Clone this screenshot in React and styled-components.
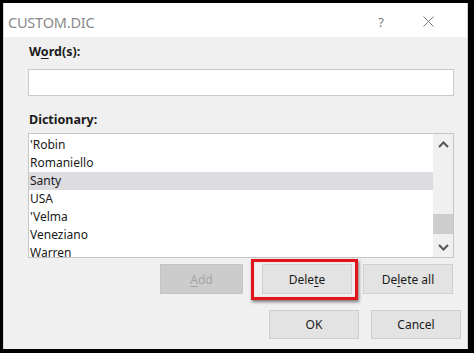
import React from 'react';
import styled, { createGlobalStyle } from 'styled-components';

const GlobalStyle = createGlobalStyle`
  html, body {
    margin: 0;
    padding: 0;
    background: #000;
  }
  body {
    font-family: 'Noto Sans', 'Open Sans', sans-serif;
  }
`;

const Page = styled.div`
  width: 474px;
  height: 353px;
  box-sizing: border-box;
  padding: 3px 6px 4px 3px;
  background: #000;
`;

const Dialog = styled.div`
  width: 465px;
  height: 346px;
  display: flex;
  flex-direction: column;
  background: #f0f0f0;
  border-left: 1px solid #d9d9d9;
  border-right: 1px solid #d0d0d0;
  box-sizing: border-box;
`;

const TitleBar = styled.div`
  height: 34px;
  flex: none;
  display: flex;
  align-items: center;
  background: #fff;
  padding: 3px 0 0 4px;
  box-sizing: border-box;
`;

const Title = styled.div`
  flex: 1;
  font-size: 14.5px;
  color: #8a8a8a;
  letter-spacing: -0.2px;
`;

const TitleButton = styled.div`
  width: ${(p) => p.$w}px;
  display: flex;
  justify-content: center;
  align-items: center;
  color: #7a7a7a;
  font-size: 13px;
`;

const Body = styled.div`
  flex: 1;
  display: flex;
  flex-direction: column;
  padding: 6px 13px 0 24px;
`;

const Label = styled.div`
  font-weight: 700;
  font-size: 12.5px;
  line-height: 18px;
  color: #1a1a1a;
  margin-top: ${(p) => p.$mt || 0}px;
  padding-left: 1px;
`;

const TextBox = styled.div`
  margin-top: 8px;
  height: 27px;
  box-sizing: border-box;
  background: #fff;
  border: 1px solid #c9c9c9;
`;

const ListBox = styled.div`
  margin-top: 4px;
  height: 125px;
  box-sizing: border-box;
  background: #fff;
  border: 1px solid #c6c6c6;
  display: flex;
  overflow: hidden;
`;

const Items = styled.div`
  flex: 1;
  padding-top: 2px;
`;

const Item = styled.div`
  height: 18px;
  line-height: 18px;
  font-size: 12px;
  color: #1a1a1a;
  padding-left: 1px;
  background: ${(p) => (p.$selected ? '#dcdce1' : 'transparent')};
`;

const ScrollBar = styled.div`
  width: 20px;
  flex: none;
  background: #f0f0f0;
  display: flex;
  flex-direction: column;
  align-items: center;
`;

const Arrow = styled.div`
  height: 20px;
  width: 100%;
  display: flex;
  align-items: center;
  justify-content: center;
`;

const Track = styled.div`
  flex: 1;
  width: 100%;
  display: flex;
  flex-direction: column;
  justify-content: flex-end;
  padding-bottom: 3px;
`;

const Thumb = styled.div`
  height: 20px;
  width: 100%;
  background: #cdcdcd;
`;

const ButtonRow = styled.div`
  display: flex;
  justify-content: flex-end;
  margin-top: ${(p) => p.$mt}px;
  margin-right: ${(p) => p.$mr || 0}px;
`;

const Button = styled.div`
  position: relative;
  width: ${(p) => p.$w || 90}px;
  height: ${(p) => p.$h || 30}px;
  margin-left: ${(p) => p.$ml || 0}px;
  box-sizing: border-box;
  display: flex;
  align-items: center;
  justify-content: center;
  font-size: 12px;
  color: ${(p) => (p.$disabled ? '#a6a6a6' : '#1a1a1a')};
  background: ${(p) => (p.$disabled ? '#cccccc' : '#e3e3e3')};
  border: 1px solid ${(p) => (p.$disabled ? '#c4c4c4' : '#cfcfcf')};
`;

const Highlight = styled.div`
  position: absolute;
  left: -12px;
  right: -7px;
  top: -6px;
  bottom: -7px;
  border: 3px solid #e3141c;
  box-shadow: 1px 2px 3px rgba(0, 0, 0, 0.5), inset 0 0 1px rgba(0, 0, 0, 0.3);
  pointer-events: none;
`;

const Key = styled.span`
  text-decoration: underline;
  text-underline-offset: 2px;
`;

const Chevron = ({ up }) => (
  <svg width="11" height="7" viewBox="0 0 11 7">
    <path
      d={up ? 'M1 6 L5.5 1.5 L10 6' : 'M1 1 L5.5 5.5 L10 1'}
      fill="none"
      stroke="#555"
      strokeWidth="2"
    />
  </svg>
);

const words = ["'Robin", 'Romaniello', 'Santy', 'USA', "'Velma", 'Veneziano', 'Warren'];

const App = () => (
  <Page>
    <GlobalStyle />
    <Dialog>
      <TitleBar>
        <Title>CUSTOM.DIC</Title>
        <TitleButton $w={16}>?</TitleButton>
        <TitleButton $w={78}>
          <svg width="11" height="11" viewBox="0 0 11 11">
            <path d="M0.5 0.5 L10.5 10.5 M10.5 0.5 L0.5 10.5" stroke="#7a7a7a" strokeWidth="1" />
          </svg>
        </TitleButton>
      </TitleBar>
      <Body>
        <Label>
          W<Key>o</Key>rd(s):
        </Label>
        <TextBox />
        <Label $mt={15}>Dictionary:</Label>
        <ListBox>
          <Items>
            {words.map((w) => (
              <Item key={w} $selected={w === 'Santy'}>
                {w}
              </Item>
            ))}
          </Items>
          <ScrollBar>
            <Arrow>
              <Chevron up />
            </Arrow>
            <Track>
              <Thumb />
            </Track>
            <Arrow>
              <Chevron />
            </Arrow>
          </ScrollBar>
        </ListBox>
        <ButtonRow $mt={6} $mr={1}>
          <Button $w={83} $disabled>
            <Key>A</Key>dd
          </Button>
          <Button $ml={19}>
            Dele<Key>t</Key>e
            <Highlight />
          </Button>
          <Button $ml={11}>
            De<Key>l</Key>ete all
          </Button>
        </ButtonRow>
        <ButtonRow $mt={16} $mr={-7}>
          <Button $h={29}>OK</Button>
          <Button $h={29} $ml={12}>
            Cancel
          </Button>
        </ButtonRow>
      </Body>
    </Dialog>
  </Page>
);

export default App;
